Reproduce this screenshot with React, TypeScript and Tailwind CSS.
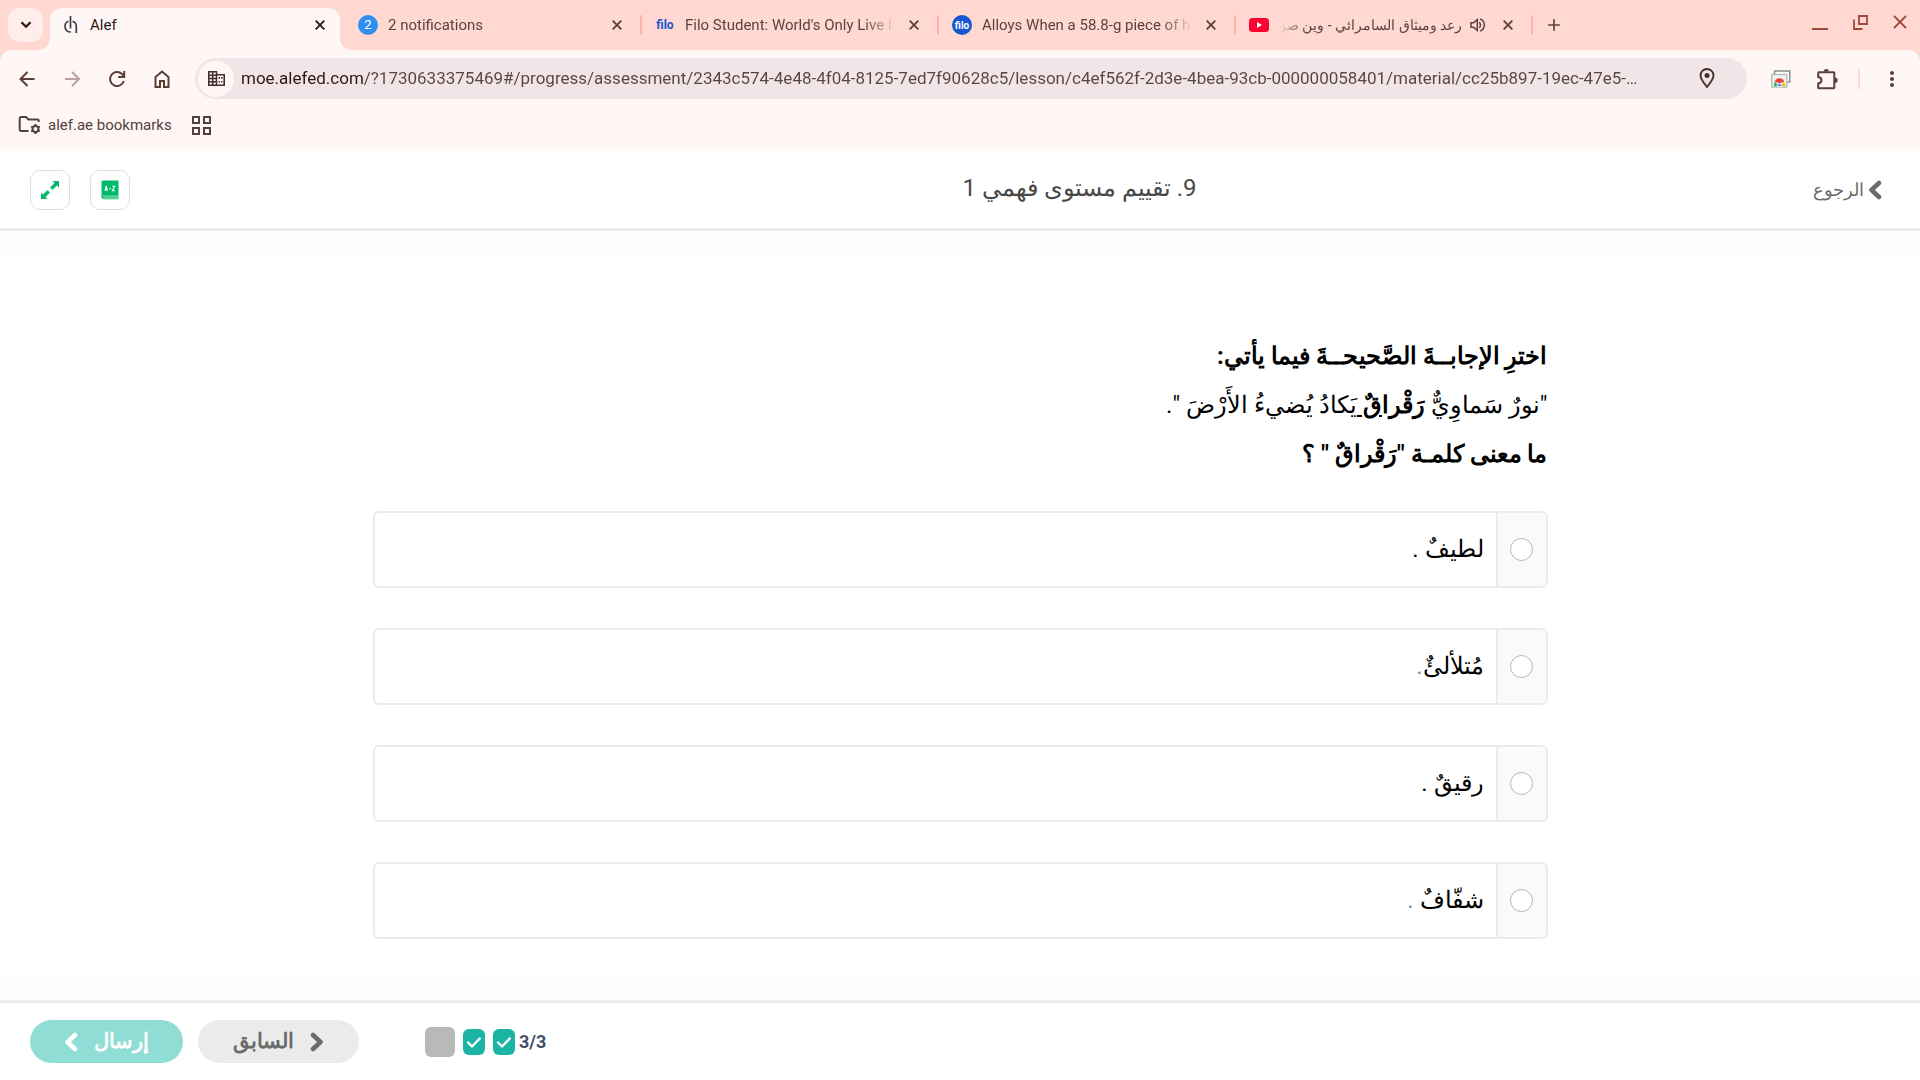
import type { ReactNode } from "react";
import { MdAdd, MdMoreVert } from "react-icons/md";

const URL_TEXT =
  "moe.alefed.com/?1730633375469#/progress/assessment/2343c574-4e48-4f04-8125-7ed7f90628c5/lesson/c4ef562f-2d3e-4bea-93cb-000000058401/material/cc25b897-19ec-47e5-…";

function AlefIcon() {
  return (
    <svg className="shrink-0" width="14" height="18" viewBox="0 0 14 18" fill="none" stroke="#3c4043" strokeWidth="1.7">
      <path d="M4.5 5.2C2.2 6 1 7.8 1 10.2C1 13.5 3.2 16 6.8 16M6.5 0V12.5" />
      <path d="M8.5 5.2C11.2 6 12.3 8 12.3 10.5V17" />
    </svg>
  );
}

function CorporateIcon() {
  return (
    <svg width="17" height="15" viewBox="0 0 17 15" fill="none" stroke="#43302e" strokeWidth="1.6">
      <path d="M.8.8h7.7v13.4H.8z" />
      <path d="M4.7 0v15M0 4.3h9M0 7.5h9M0 10.8h9" />
      <path d="M8.5 3.8h7.7v10.4H8.5" />
      <path d="M10.5 6.9h1.5M13 6.9h1.5M10.5 10.7h1.5M13 10.7h1.5" />
    </svg>
  );
}

function FolderGearIcon() {
  return (
    <svg width="24" height="20" viewBox="0 0 24 20" fill="none" stroke="#54413f" strokeWidth="2">
      <path d="M10.5 16H3a1.3 1.3 0 0 1-1.3-1.3V3.3A1.3 1.3 0 0 1 3 2H8L10.5 4.5H19.5a1.3 1.3 0 0 1 1.3 1.3V7" />
      <circle cx="17.5" cy="14" r="3" />
      <path d="M17.5 9v2M17.5 17v2M13.2 11.5l1.7 1M20.1 15.5l1.7 1M13.2 16.5l1.7-1M20.1 12.5l1.7-1" />
    </svg>
  );
}

function PhotosIcon() {
  return (
    <svg width="20" height="18" viewBox="0 0 20 18" fill="none">
      <path d="M3.5 4V1H18.8V12H16.5" fill="#fff" stroke="#85908c" strokeWidth="1.5" />
      <rect x="0.8" y="4.5" width="15" height="12.5" fill="#eef3f1" stroke="#b3bcb8" strokeWidth="1.4" />
      <path d="M3.8 11.5a5 5 0 0 1 9.4 0l-4.7 2z" fill="#ea4335" />
      <path d="M3 16.3c0-2 .3-3.5 1-4.8l3.5 4.8z" fill="#34a853" />
      <path d="M14 16.3c0-2-.3-3.5-1-4.8L9.5 16.3z" fill="#fbbc04" />
      <path d="M5.8 16.3a2.7 2.7 0 0 1 5.4 0z" fill="#4285f4" stroke="#fff" strokeWidth=".8" />
    </svg>
  );
}

function PinIcon() {
  return (
    <svg className="shrink-0" width="16" height="21" viewBox="0 0 16 21" fill="none" stroke="#43302e" strokeWidth="1.9">
      <path d="M8 19C4 14 1.5 11 1.5 7.5a6.5 6.5 0 0 1 13 0C14.5 11 12 14 8 19z" />
      <circle cx="8" cy="7.5" r="2.5" fill="#43302e" stroke="none" />
    </svg>
  );
}

function PuzzleIcon() {
  return (
    <svg width="22" height="22" viewBox="0 0 22 22">
      <path
        d="M3 4.2h14.5a.8.8 0 0 1 .8.8v14.5a.8.8 0 0 1-.8.8H3a.8.8 0 0 1-.8-.8V15.5c2.2-.3 3.3-1.5 3.3-3.2S4.4 9.3 2.2 9V5a.8.8 0 0 1 .8-.8z"
        fill="none"
        stroke="currentColor"
        strokeWidth="2"
      />
      <path d="M7.7 3.5a2.6 2.6 0 0 1 5.2 0zM19 9.6a2.6 2.6 0 0 1 0 5.2z" fill="currentColor" />
    </svg>
  );
}

function SpeakerIcon() {
  return (
    <svg width="16" height="14" viewBox="0 0 16 14" fill="none" stroke="#5c4340" strokeWidth="1.5">
      <path d="M1 4.8h2.5L7.3 1.6v10.8L3.5 9.2H1z" />
      <path d="M9.3 4.3c1.6 1.4 1.6 4 0 5.4M10 .9c5.8 2.2 5.8 10 0 12.2" />
    </svg>
  );
}

function CloseIcon() {
  return (
    <svg width="10" height="10" viewBox="0 0 10 10" stroke="currentColor" strokeWidth="1.9">
      <path d="M.7.7l8.6 8.6M9.3.7L.7 9.3" />
    </svg>
  );
}

function Chevron({ side, color }: { side: "left" | "right"; color: string }) {
  return (
    <svg width="14" height="20" viewBox="0 0 14 20" fill="none" stroke={color} strokeWidth="4.5" strokeLinecap="round" strokeLinejoin="round">
      <path d={side === "left" ? "M11 3L3.5 10l7.5 7" : "M3 3l7.5 7L3 17"} />
    </svg>
  );
}

function ExpandIcon() {
  return (
    <svg width="20" height="20" viewBox="0 0 20 20" fill="#00b96b">
      <path d="M12.5 1H19v6.5l-2-2-4.700 4.700-2.500-2.500L14.500 3z" />
      <path d="M7.500 19H1v-6.500l2 2 4.700-4.700 2.500 2.500L5.500 17z" />
      <path d="M7.500 10l2.500 2.500M10 7.500l2.500 2.500" stroke="#fff" strokeWidth="0.8" />
    </svg>
  );
}

function DictionaryIcon() {
  return (
    <svg width="18" height="20" viewBox="0 0 18 20">
      <path d="M2 .5h15.500v18.700H2.500A2 2 0 0 1 .5 17.500V2A1.500 1.500 0 0 1 2 .5z" fill="#00b96b" />
      <path d="M2 15.800H17.500v.8H2zM2 17.800H17.500v.6H2z" fill="#d3f3e5" />
      <path d="M4 11l1.200-5 1.200 5M4.500 9.300h1.500M8 8.700h2M11.300 6.200h2.500l-2.500 4.600h2.700" fill="none" stroke="#fff" strokeWidth="1.1" />
    </svg>
  );
}

function TickBox() {
  return (
    <svg width="22" height="26" viewBox="0 0 22 26">
      <rect width="22" height="26" rx="6" fill="#1bb3a3" />
      <path d="M5 13.5l4 4L16.8 9.5" fill="none" stroke="#fff" strokeWidth="2.4" strokeLinecap="round" strokeLinejoin="round" />
    </svg>
  );
}

function CloseButton({ label }: { label: string }) {
  return (
    <button aria-label={`Close ${label}`} className="mr-3.5 ml-2 flex size-5 shrink-0 items-center justify-center">
      <CloseIcon />
    </button>
  );
}

function Tab({ icon, title }: { icon: ReactNode; title: string }) {
  return (
    <div className="flex h-[34px] w-[297px] min-w-0 items-center pl-3.5">
      <span className="flex w-5 shrink-0 justify-center">{icon}</span>
      <button
        role="tab"
        className="ml-2.5 min-w-0 flex-1 overflow-hidden text-left whitespace-nowrap [mask-image:linear-gradient(to_right,black_85%,transparent)]"
      >
        {title}
      </button>
      <CloseButton label={title} />
    </div>
  );
}

function Separator() {
  return <span className="-mx-px h-5 w-0.5 shrink-0 rounded bg-[#ffb4a5]" />;
}

function FiloMark({ badge }: { badge?: boolean }) {
  return (
    <span
      className={
        badge
          ? "flex size-5 items-center justify-center rounded-full bg-[#1557d0] text-[10px] font-bold text-white"
          : "text-xs font-bold text-[#1557d0]"
      }
    >
      filo
    </span>
  );
}

function TabStrip() {
  return (
    <div className="flex h-[50px] bg-[#ffd9d1] pt-2 pl-2 text-[15px] text-[#5c4340]">
      <button aria-label="Search tabs" className="flex h-[34px] w-[35px] shrink-0 items-center justify-center rounded-xl bg-[#ffede9]">
        <svg width="12" height="8" viewBox="0 0 12 8" fill="none" stroke="#2b1715" strokeWidth="2.3">
          <path d="M1.5 1.2L6 5.7l4.5-4.5" />
        </svg>
      </button>
      <div role="tablist" className="flex min-w-0">
        <div className="relative ml-[7px] flex h-[42px] w-[290px] min-w-0 items-center rounded-t-xl bg-[#fff7f5] pb-2 pl-3.5 text-[#2b1715]">
          <svg className="absolute bottom-0 -left-3" width="12" height="12" viewBox="0 0 12 12" fill="#fff7f5">
            <path d="M12 0v12H0A12 12 0 0 0 12 0z" />
          </svg>
          <svg className="absolute -right-3 bottom-0" width="12" height="12" viewBox="0 0 12 12" fill="#fff7f5">
            <path d="M0 0v12h12A12 12 0 0 1 0 0z" />
          </svg>
          <AlefIcon />
          <button role="tab" aria-selected="true" className="ml-3 min-w-0 flex-1 text-left">
            Alef
          </button>
          <button aria-label="Close Alef" className="mr-2.5 flex size-5 items-center justify-center">
            <CloseIcon />
          </button>
        </div>
        <div className="ml-1 flex h-[34px] min-w-0 items-center">
          <Tab
            icon={<span className="flex size-5 items-center justify-center rounded-full bg-[#2f8ff0] text-[13px] text-white">2</span>}
            title="2 notifications"
          />
          <Separator />
          <Tab icon={<FiloMark />} title="Filo Student: World's Only Live I" />
          <Separator />
          <Tab icon={<FiloMark badge />} title="Alloys When a 58.8-g piece of h" />
          <Separator />
          <div className="flex h-[34px] w-[297px] min-w-0 items-center pl-3.5">
            <svg className="shrink-0" width="20" height="14" viewBox="0 0 20 14">
              <rect width="20" height="14" rx="3.5" fill="#ff0033" />
              <path d="M8 4v6l5-3z" fill="#fff" />
            </svg>
            <button
              role="tab"
              dir="rtl"
              className="ml-2.5 min-w-0 flex-1 overflow-hidden text-right text-sm whitespace-nowrap [mask-image:linear-gradient(to_left,black_85%,transparent)]"
            >
              رعد وميثاق السامرائي - وين صرت
            </button>
            <span className="mr-1 ml-2 shrink-0">
              <SpeakerIcon />
            </span>
            <CloseButton label="video" />
          </div>
          <Separator />
        </div>
      </div>
      <button aria-label="New tab" className="ml-3 flex h-[34px] w-5 items-center justify-center">
        <MdAdd size={20} />
      </button>
      <div className="ml-auto flex h-7 items-center gap-[25px] pr-[13px] text-[#a04a3a]">
        <button aria-label="Minimize" className="flex h-4 w-4 items-end">
          <span className="h-0.5 w-full bg-current" />
        </button>
        <button aria-label="Restore">
          <svg width="15" height="15" viewBox="0 0 15 15" fill="none" stroke="currentColor" strokeWidth="1.8">
            <path d="M6 1h8v8H6zM1 4.500V14h8.500" />
          </svg>
        </button>
        <button aria-label="Close window">
          <svg width="14" height="14" viewBox="0 0 14 14" stroke="currentColor" strokeWidth="1.8">
            <path d="M1 1l12 12M13 1L1 13" />
          </svg>
        </button>
      </div>
    </div>
  );
}

function NavButton({ label, path, muted }: { label: string; path: string; muted?: boolean }) {
  return (
    <button aria-label={label} className={muted ? "text-[#b9a3a0]" : "text-[#5c3d38]"}>
      <svg width="20" height="20" viewBox="0 0 20 20" fill="none" stroke="currentColor" strokeWidth="2">
        <path d={path} />
      </svg>
    </button>
  );
}

function Toolbar() {
  return (
    <div className="bg-[#ffd9d1]">
      <div className="rounded-t-xl bg-[#fff7f5]">
        <div className="flex items-center pt-2 pr-4 pl-[17px] text-[#5c3d38]">
          <div className="mr-[23px] flex gap-[25px]">
            <NavButton label="Back" path="M17.500 10H4M10.500 3L3.500 10l7 7" />
            <NavButton label="Forward" path="M3 10h14M10 3l7 7-7 7" muted />
            <NavButton label="Reload" path="M16.800 12A7 7 0 1 1 15 5L17 7M17.200 2v6h-6" />
            <NavButton label="Home" path="M3.500 8L10 2.500 16.500 8V18H12V12H8v6H3.500z" />
          </div>
          <div className="flex h-[41px] min-w-0 flex-1 items-center rounded-full bg-[#f2e5e8] pr-8 pl-[3px]">
            <button aria-label="Site information" className="flex size-9 shrink-0 items-center justify-center rounded-full bg-[#fff7f5]">
              <CorporateIcon />
            </button>
            <input
              aria-label="Address"
              readOnly
              value={URL_TEXT}
              className="ml-[7px] min-w-0 flex-1 bg-linear-to-r from-[#2b1715] from-[122px] to-[#574542] to-[122px] bg-clip-text text-[17px] text-transparent outline-none"
            />
            <PinIcon />
          </div>
          <div className="flex items-center pl-6">
            <button aria-label="Photos"><PhotosIcon /></button>
            <button aria-label="Extensions" className="ml-[25px]"><PuzzleIcon /></button>
            <span className="ml-5 h-5 w-0.5 bg-[#ffd9d1]" />
            <button aria-label="Menu" className="ml-5"><MdMoreVert size={24} /></button>
          </div>
        </div>
        <div className="flex h-[52px] items-center pl-[18px] text-[15px] text-[#54413f]">
          <button className="flex items-center gap-1.5">
            <FolderGearIcon />
            alef.ae bookmarks
          </button>
          <button aria-label="Apps" className="ml-5 grid grid-cols-2 gap-[3px]">
            <span className="size-2 border-2 border-[#54413f]" />
            <span className="size-2 border-2 border-[#54413f]" />
            <span className="size-2 border-2 border-[#54413f]" />
            <span className="size-2 border-2 border-[#54413f]" />
          </button>
        </div>
      </div>
    </div>
  );
}

function Header() {
  return (
    <header dir="rtl" className="flex h-20 items-center border-b-[3px] border-[#ebebeb] bg-white px-[30px]">
      <a href="#back" className="flex items-center gap-1 pr-2 text-lg text-[#6b6b6b]">
        <Chevron side="left" color="#6b6b6b" />
        الرجوع
      </a>
      <h1 className="flex-1 pb-1 pl-[216px] text-center text-2xl text-[#484848]">9. تقييم مستوى فهمي 1</h1>
      <div className="flex gap-5">
        <button aria-label="Dictionary" className="flex size-10 items-center justify-center rounded-[10px] border border-[#dedede]">
          <DictionaryIcon />
        </button>
        <button aria-label="Full screen" className="flex size-10 items-center justify-center rounded-[10px] border border-[#dedede]">
          <ExpandIcon />
        </button>
      </div>
    </header>
  );
}

const OPTIONS = [
  { text: "لطيفٌ", dot: " .", muted: false },
  { text: "مُتلألئٌ", dot: ".", muted: true },
  { text: "رقيقٌ", dot: " .", muted: false },
  { text: "شفّافٌ", dot: " .", muted: true },
];

function Question() {
  return (
    <main dir="rtl" className="flex flex-1 flex-col bg-white">
      <div className="h-[23px] bg-[#fbfefd]" />
      <div className="mx-auto w-full max-w-[1175px] flex-1 pt-[78px]">
        <div id="question" className="text-2xl leading-[49px] text-black">
          <p className="font-bold">اخترِ الإجابــةَ الصَّحيحــةَ فيما يأتي:</p>
          <p>
            "نورٌ سَماوِيٌّ <b>رَقْرا<u>قٌ </u></b>يَكادُ يُضيءُ الأَرْضَ ".
          </p>
          <p className="font-bold">ما معنى كلمـة "رَقْراقٌ " ؟</p>
        </div>
        <div role="radiogroup" aria-labelledby="question" className="mt-8 flex flex-col gap-10">
          {OPTIONS.map((o) => (
            <label key={o.text} className="flex h-[77px] overflow-hidden rounded-md border-2 border-[#ebebeb]">
              <span className="flex w-[50px] items-center justify-center border-l-2 border-[#ebebeb] bg-[#fafafa]">
                <input type="radio" name="answer" className="size-[23px] appearance-none rounded-full border border-[#b5b5b5] bg-white" />
              </span>
              <span className="flex-1 pt-5 pr-3 text-2xl text-black">
                {o.text}
                <span className={o.muted ? "text-[#78909c]" : ""}>{o.dot}</span>
              </span>
            </label>
          ))}
        </div>
      </div>
      <div className="h-[22px] bg-[#fbfefd]" />
    </main>
  );
}

function Footer() {
  return (
    <footer className="flex h-20 items-center border-t-[3px] border-[#ebebeb] bg-white pl-[30px]">
      <button dir="rtl" className="flex h-[43px] w-[153px] items-center justify-center gap-4 rounded-full bg-[#8fddd5] text-[21px] font-bold text-white">
        إرسال
        <Chevron side="left" color="#ffffff" />
      </button>
      <button dir="rtl" className="ml-[15px] flex h-[43px] w-[161px] items-center justify-center gap-4 rounded-full bg-[#ebebeb] text-[21px] font-bold text-[#6b6b6b]">
        <Chevron side="right" color="#6b6b6b" />
        السابق
      </button>
      <div className="ml-[66px] flex items-center gap-2">
        <span className="size-[30px] rounded-md bg-[#b9b9b9]" />
        <TickBox />
        <TickBox />
      </div>
      <span className="ml-1 text-lg font-bold text-[#44506a]">3/3</span>
    </footer>
  );
}

export default function App() {
  return (
    <div className="flex min-h-screen flex-col bg-white font-[Roboto,'Noto_Sans',sans-serif]">
      <TabStrip />
      <Toolbar />
      <Header />
      <Question />
      <Footer />
    </div>
  );
}
